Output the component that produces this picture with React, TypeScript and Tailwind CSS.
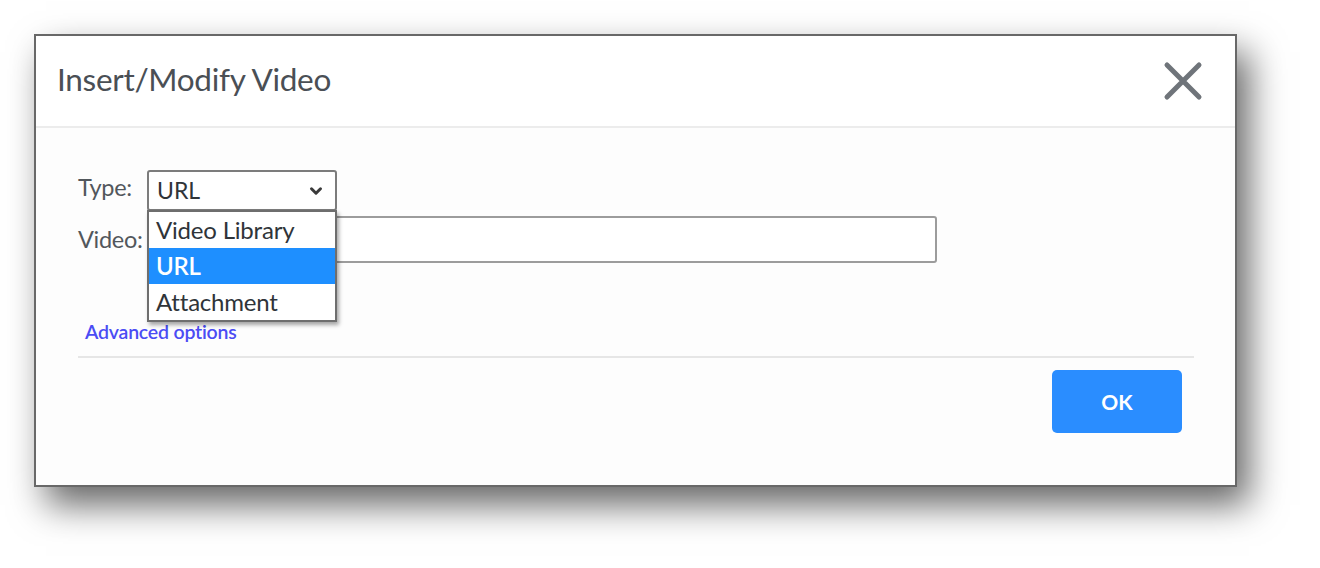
import { ChevronDown } from 'lucide-react'

const FONT = { fontFamily: '"Source Sans Pro", Lato, "Open Sans", sans-serif' }

const options = ['Video Library', 'URL', 'Attachment']

export default function App() {
  return (
    <div className="min-h-screen bg-white pl-[34px] pt-[34px]" style={FONT}>
      <div className="flex h-[453px] w-[1203px] flex-col border-2 border-[#686868] bg-[#fdfdfd] shadow-[12px_18px_34px_rgba(0,0,0,0.6)]">
        {/* Header */}
        <div className="flex h-[92px] shrink-0 items-center justify-between border-b-2 border-[#ececec] bg-white pl-[21px] pr-[32px]">
          <h1 className="pb-[2px] text-[31.5px] tracking-[-0.3px] text-[#4a4f55]">Insert/Modify Video</h1>
          <svg width="40" height="40" viewBox="0 0 40 40" className="text-[#6f747a]">
            <path d="M4 4L36 36M36 4L4 36" stroke="currentColor" strokeWidth="5" strokeLinecap="round" />
          </svg>
        </div>

        {/* Body */}
        <div className="flex flex-col pl-[42px] pr-[41px] pt-[42px]">
          <div className="flex h-[41px] items-center gap-[10px]">
            <span className="w-[59px] pb-[8px] text-[23.5px] leading-[28px] tracking-[-0.3px] text-[#52575c]">Type:</span>
            <div className="relative">
              <div className="flex h-[41px] w-[190px] items-center justify-between rounded-[3px] border-2 border-[#7c7c7c] bg-white pl-[8px] pr-[10px] text-[23px] text-[#2f3439]">
                <span>URL</span>
                <ChevronDown size={18} strokeWidth={4} className="text-[#3a3a3a]" />
              </div>
              <ul className="absolute left-0 top-[40px] z-10 w-[190px] border-2 border-[#6e6e6e] bg-white text-[24px] leading-[36px] tracking-[-0.2px] text-[#2f3439] shadow-[2px_3px_4px_rgba(0,0,0,0.35)]">
                {options.map((o) => (
                  <li
                    key={o}
                    className={o === 'URL' ? 'bg-[#1e8fff] pl-[7px] font-semibold text-white' : 'pl-[7px]'}
                  >
                    {o}
                  </li>
                ))}
              </ul>
            </div>
          </div>

          <div className="mt-[5px] flex items-center gap-[10px]">
            <span className="w-[59px] text-[23.5px] tracking-[-0.3px] text-[#52575c]">Video:</span>
            <div className="h-[47px] w-[790px] rounded-[3px] border-2 border-[#9c9c9c] bg-white" />
          </div>

          <a className="ml-[7px] mt-[54px] text-[19.5px] font-semibold tracking-[-0.2px] text-[#4b4cf4]">Advanced options</a>

          <div className="mt-[10px] border-t-2 border-[#e6e6e6]" />

          <div className="flex justify-end pr-[12px] pt-[12px]">
            <button className="flex h-[63px] w-[130px] items-center justify-center rounded-[5px] bg-[#2a8dff] text-[21px] font-bold text-white">
              OK
            </button>
          </div>
        </div>
      </div>
    </div>
  )
}
